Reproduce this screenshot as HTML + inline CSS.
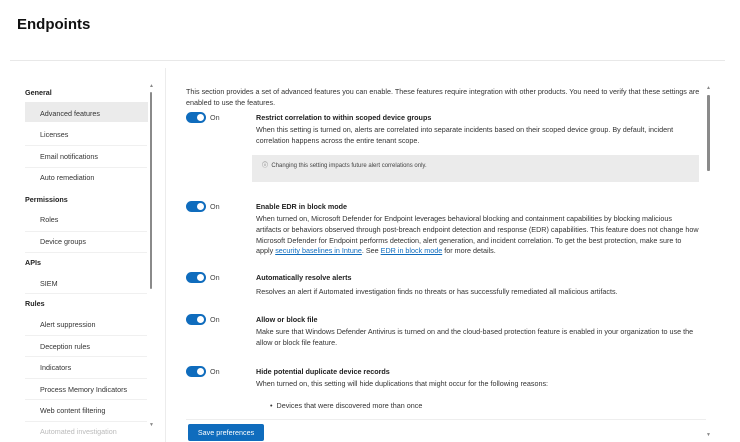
<!DOCTYPE html>
<html><head><style>
*{margin:0;padding:0;box-sizing:border-box}
body{width:740px;height:442px;background:#fff;font-family:"Liberation Sans",sans-serif;color:#222;position:relative;overflow:hidden;font-size:7.2px}
.a{position:absolute;white-space:nowrap}
h1{position:absolute;left:17px;top:16px;font-size:15px;font-weight:bold;color:#111}
.hd{font-weight:bold;color:#222}
.nav{left:40px;color:#333}
.sep{position:absolute;left:25px;width:122px;height:1px;background:#f0f0f0}
.tg{position:absolute;left:186px;width:20px;height:11px;border-radius:6px;background:#0f6cbd}
.tg::after{content:"";position:absolute;right:2px;top:2px;width:7px;height:7px;border-radius:50%;background:#fff}
.on{left:210px;color:#444}
.t{left:256px;font-weight:bold;color:#222}
.d{left:256px;color:#333;line-height:10.8px}
a{color:#0f6cbd;text-decoration:underline}
</style></head><body>
<h1>Endpoints</h1>
<div style="position:absolute;left:10px;top:60px;width:715px;height:1px;background:#e8e8e8"></div>
<div style="position:absolute;left:165px;top:68px;width:1px;height:374px;background:#ececec"></div>
<div class="a" style="left:149px;top:83px;font-size:5px;color:#888">▲</div>
<div style="position:absolute;left:150px;top:92px;width:2px;height:197px;background:#8a8a8a;border-radius:1px"></div>
<div class="a" style="left:149px;top:422px;font-size:5px;color:#888">▼</div>
<div style="position:absolute;left:25px;top:102px;width:123px;height:20px;background:#ebebeb"></div>
<div class="a hd" style="left:25px;top:88px">General</div>
<div class="a nav" style="top:109px">Advanced features</div>
<div class="a nav" style="top:130px">Licenses</div><div class="sep" style="top:145px"></div>
<div class="a nav" style="top:152px">Email notifications</div><div class="sep" style="top:167px"></div>
<div class="a nav" style="top:173px">Auto remediation</div>
<div class="a hd" style="left:25px;top:195px">Permissions</div>
<div class="a nav" style="top:215px">Roles</div><div class="sep" style="top:231px"></div>
<div class="a nav" style="top:237px">Device groups</div><div class="sep" style="top:252px"></div>
<div class="a hd" style="left:25px;top:258px">APIs</div>
<div class="a nav" style="top:279px">SIEM</div><div class="sep" style="top:293px"></div>
<div class="a hd" style="left:25px;top:299px">Rules</div>
<div class="a nav" style="top:320px">Alert suppression</div><div class="sep" style="top:335px"></div>
<div class="a nav" style="top:342px">Deception rules</div><div class="sep" style="top:356px"></div>
<div class="a nav" style="top:363px">Indicators</div><div class="sep" style="top:378px"></div>
<div class="a nav" style="top:385px">Process Memory Indicators</div><div class="sep" style="top:399px"></div>
<div class="a nav" style="top:406px">Web content filtering</div><div class="sep" style="top:421px"></div>
<div class="a nav" style="top:427px;color:#bbb">Automated investigation</div>
<div class="a" style="left:706px;top:85px;font-size:5px;color:#888">▲</div>
<div style="position:absolute;left:707px;top:95px;width:3px;height:76px;background:#8a8a8a;border-radius:1px"></div>
<div class="a" style="left:706px;top:432px;font-size:5px;color:#888">▼</div>
<div class="a d" style="left:186px;top:87px">This section provides a set of advanced features you can enable. These features require integration with other products. You need to verify that these settings are<br>enabled to use the features.</div>
<div class="tg" style="top:112px"></div><div class="a on" style="top:113px">On</div>
<div class="a t" style="top:113px">Restrict correlation to within scoped device groups</div>
<div class="a d" style="top:125px">When this setting is turned on, alerts are correlated into separate incidents based on their scoped device group. By default, incident<br>correlation happens across the entire tenant scope.</div>
<div style="position:absolute;left:252px;top:155px;width:447px;height:27px;background:#ebebeb"></div>
<div class="a" style="left:262px;top:160px;font-size:6px;color:#444">ⓘ&nbsp; Changing this setting impacts future alert correlations only.</div>
<div class="tg" style="top:201px"></div><div class="a on" style="top:202px">On</div>
<div class="a t" style="top:202px">Enable EDR in block mode</div>
<div class="a d" style="top:214px">When turned on, Microsoft Defender for Endpoint leverages behavioral blocking and containment capabilities by blocking malicious<br>artifacts or behaviors observed through post-breach endpoint detection and response (EDR) capabilities. This feature does not change how<br>Microsoft Defender for Endpoint performs detection, alert generation, and incident correlation. To get the best protection, make sure to<br>apply <a>security baselines in Intune</a>. See <a>EDR in block mode</a> for more details.</div>
<div class="tg" style="top:272px"></div><div class="a on" style="top:273px">On</div>
<div class="a t" style="top:273px">Automatically resolve alerts</div>
<div class="a d" style="top:287px">Resolves an alert if Automated investigation finds no threats or has successfully remediated all malicious artifacts.</div>
<div class="tg" style="top:314px"></div><div class="a on" style="top:315px">On</div>
<div class="a t" style="top:315px">Allow or block file</div>
<div class="a d" style="top:327px">Make sure that Windows Defender Antivirus is turned on and the cloud-based protection feature is enabled in your organization to use the<br>allow or block file feature.</div>
<div class="tg" style="top:366px"></div><div class="a on" style="top:367px">On</div>
<div class="a t" style="top:367px">Hide potential duplicate device records</div>
<div class="a d" style="top:379px">When turned on, this setting will hide duplications that might occur for the following reasons:</div>
<div class="a d" style="left:270px;top:401px">•&nbsp; Devices that were discovered more than once</div>
<div style="position:absolute;left:186px;top:419px;width:520px;height:1px;background:#eee"></div>
<div class="a" style="left:188px;top:424px;width:76px;height:17px;background:#0f6cbd;color:#fff;text-align:center;line-height:17px;border-radius:2px">Save preferences</div>
</body></html>
